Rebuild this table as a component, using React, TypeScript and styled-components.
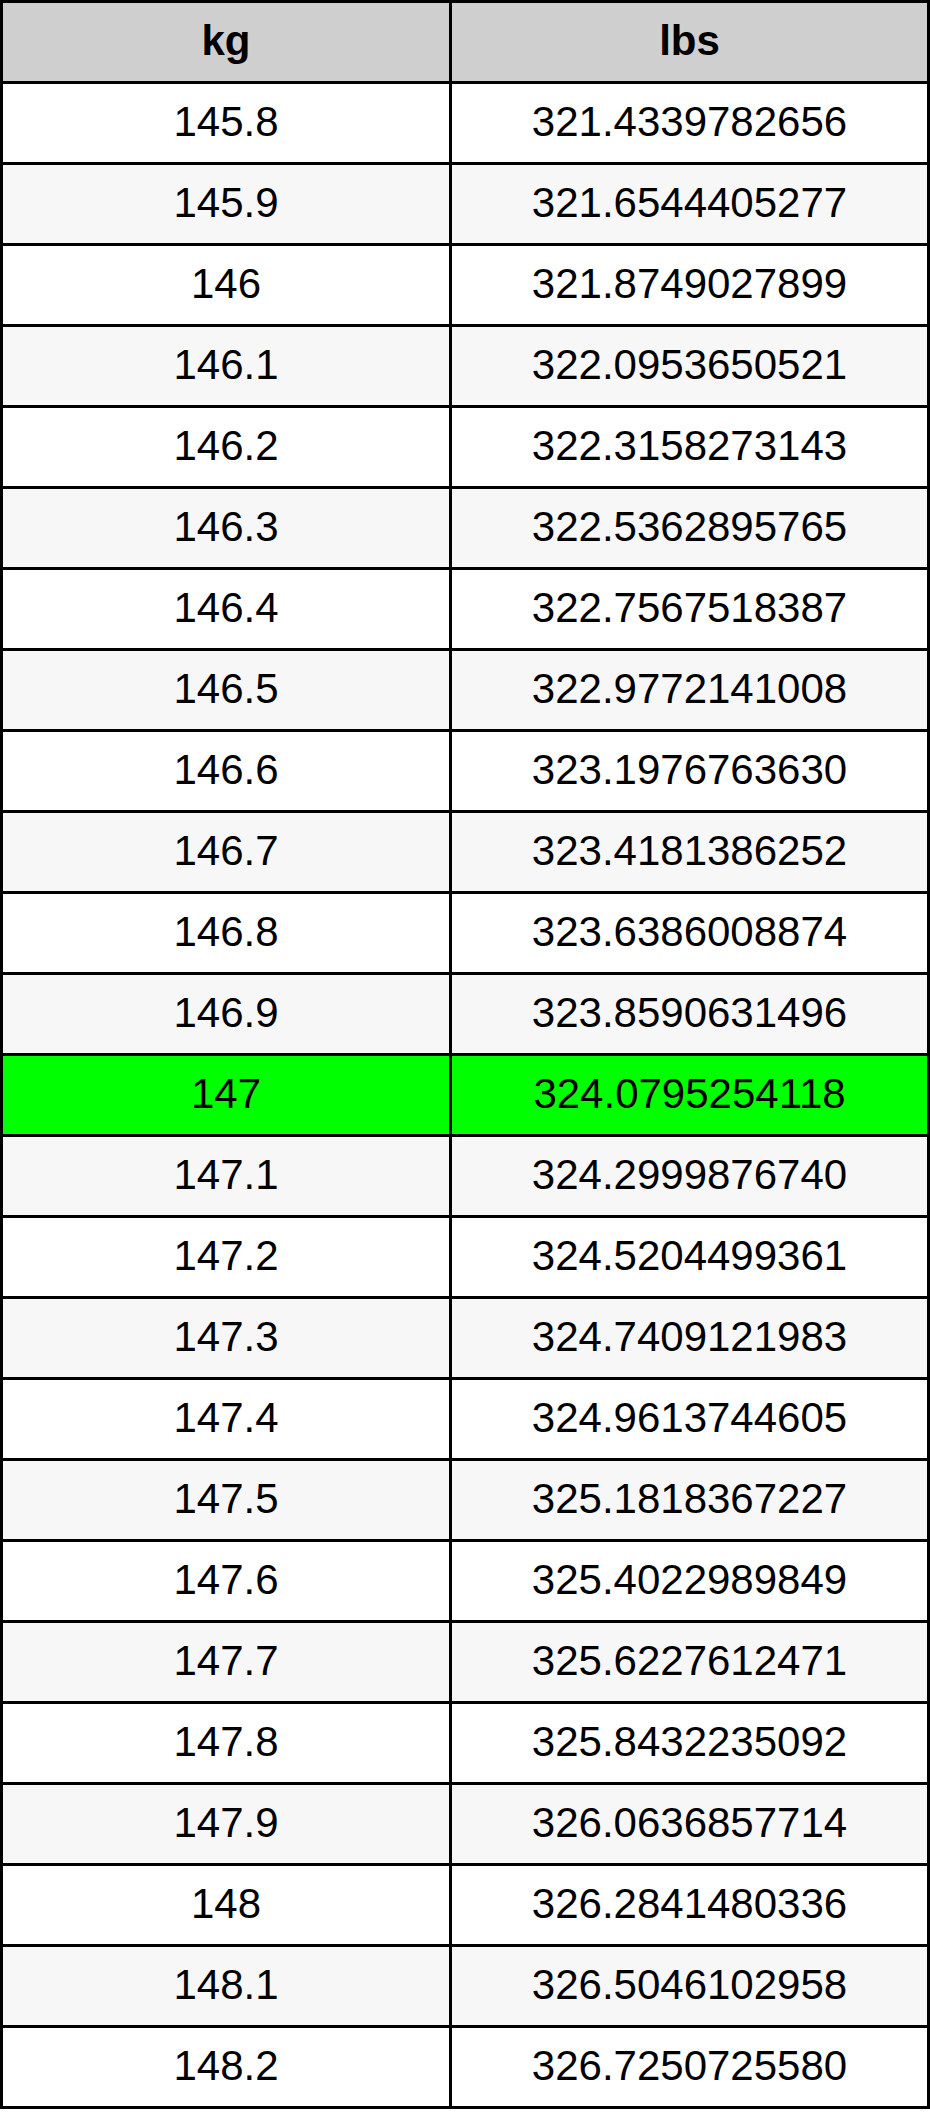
import React, { FC } from 'react'
import styled, { createGlobalStyle } from 'styled-components'

const GlobalStyle = createGlobalStyle`
  html, body {
    margin: 0;
    padding: 0;
    background: #ffffff;
  }

  body {
    font-family: 'Liberation Sans', Arial, Helvetica, sans-serif;
  }
`

const rows: [string, string][] = [
  ['145.8', '321.4339782656'],
  ['145.9', '321.6544405277'],
  ['146', '321.8749027899'],
  ['146.1', '322.0953650521'],
  ['146.2', '322.3158273143'],
  ['146.3', '322.5362895765'],
  ['146.4', '322.7567518387'],
  ['146.5', '322.9772141008'],
  ['146.6', '323.1976763630'],
  ['146.7', '323.4181386252'],
  ['146.8', '323.6386008874'],
  ['146.9', '323.8590631496'],
  ['147', '324.0795254118'],
  ['147.1', '324.2999876740'],
  ['147.2', '324.5204499361'],
  ['147.3', '324.7409121983'],
  ['147.4', '324.9613744605'],
  ['147.5', '325.1818367227'],
  ['147.6', '325.4022989849'],
  ['147.7', '325.6227612471'],
  ['147.8', '325.8432235092'],
  ['147.9', '326.0636857714'],
  ['148', '326.2841480336'],
  ['148.1', '326.5046102958'],
  ['148.2', '326.7250725580'],
]

const HIGHLIGHT = '147'

type Tone = 'head' | 'plain' | 'striped' | 'active'

const toneColor: Record<Tone, string> = {
  head: '#cfcfcf',
  plain: '#ffffff',
  striped: '#f7f7f7',
  active: '#00ff00',
}

const Table = styled.div`
  display: grid;
  grid-template-columns: 446px 1fr;
  grid-auto-rows: 78px;
  gap: 3px;
  width: 930px;
  box-sizing: border-box;
  padding: 3px;
  background: #000000;
`

const Cell = styled.div<{ tone: Tone }>`
  display: flex;
  align-items: center;
  justify-content: center;
  background: ${({ tone }) => toneColor[tone]};
  color: #000000;
  font-size: 42px;
  font-weight: ${({ tone }) => (tone === 'head' ? 700 : 400)};
  line-height: 1;
  padding-bottom: 2px;
`

const App: FC = () => (
  <>
    <GlobalStyle />
    <Table>
      <Cell tone="head">kg</Cell>
      <Cell tone="head">lbs</Cell>
      {rows.map(([kg, lbs], i) => {
        const tone: Tone = kg === HIGHLIGHT ? 'active' : i % 2 === 1 ? 'striped' : 'plain'
        return (
          <React.Fragment key={kg}>
            <Cell tone={tone}>{kg}</Cell>
            <Cell tone={tone}>{lbs}</Cell>
          </React.Fragment>
        )
      })}
    </Table>
  </>
)

export default App
